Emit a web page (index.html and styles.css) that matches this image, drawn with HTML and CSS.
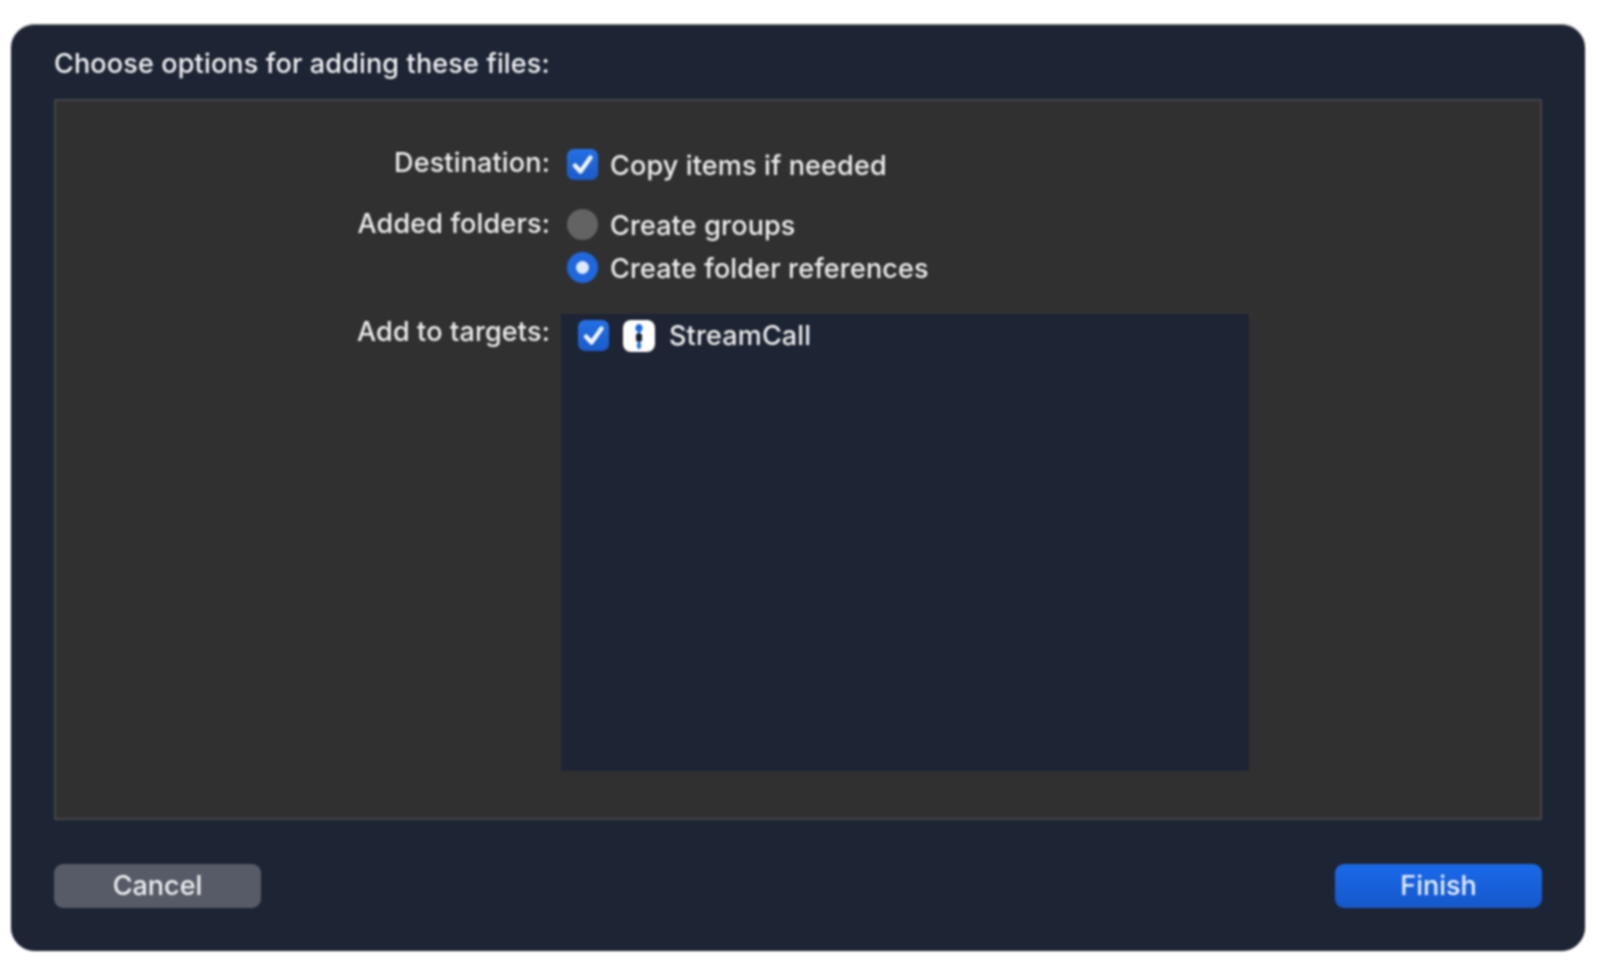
FILE: index.html
```html
<!DOCTYPE html>
<html lang="en">
<head>
  <meta charset="UTF-8" />
  <title>Choose options for adding these files</title>
  <link rel="stylesheet" href="styles.css">
</head>
<body>
  <div class="sheet">
    <h1 class="sheet-title">Choose options for adding these files:</h1>

    <div class="panel">
      <div class="form">
        <div class="label label-dest">Destination:</div>
        <div class="field field-dest">
          <label class="option">
            <span class="check">
              <svg viewBox="0 0 31 31"><path d="M8 16.5l5.5 6L23.5 8.5" /></svg>
            </span>
            <span>Copy items if needed</span>
          </label>
        </div>

        <div class="label label-folders">Added folders:</div>
        <div class="field field-folders">
          <label class="option">
            <span class="radio"></span>
            <span>Create groups</span>
          </label>
          <label class="option">
            <span class="radio radio-on"></span>
            <span>Create folder references</span>
          </label>
        </div>

        <div class="label label-targets">Add to targets:</div>
        <div class="targets">
          <div class="target-row">
            <span class="check">
              <svg viewBox="0 0 31 31"><path d="M8 16.5l5.5 6L23.5 8.5" /></svg>
            </span>
            <span class="app-icon">
              <svg viewBox="0 0 32 32">
                <path class="app-line" d="M16 4v25" />
                <circle class="app-dot" cx="16" cy="8" r="3.6" />
                <rect class="app-body" x="13" y="13.5" width="6" height="8" rx="1.5" />
                <circle class="app-dot" cx="16" cy="25.5" r="2.2" />
              </svg>
            </span>
            <span>StreamCall</span>
          </div>
        </div>
      </div>
    </div>

    <div class="actions">
      <button class="btn btn-cancel">Cancel</button>
      <button class="btn btn-finish">Finish</button>
    </div>
  </div>
</body>
</html>
```

FILE: styles.css
```css
* {
  margin: 0;
  padding: 0;
  box-sizing: border-box;
  font-family: Inter, Roboto, "Liberation Sans", Arial, sans-serif;
}
body {
  background: #ffffff;
  padding: 24px 15px 19px 11px;
  height: 970px;
  overflow: hidden;
}
.sheet {
  height: 927px;
  background: #1d2433;
  border-radius: 24px;
  border-top: 1px solid #8d929b;
  box-shadow: 0 0 1px #777;
  padding: 0 43px 0 43px;
  display: flex;
  flex-direction: column;
  filter: blur(0.8px);
}
.sheet-title {
  font-size: 27px;
  font-weight: 500;
  letter-spacing: 0.15px;
  color: #eeeff1;
  height: 74px;
  line-height: 78px;
}

/* Grey panel with the form */
.panel {
  height: 721px;
  background: #303030;
  border: 2px solid #444547;
}
.form {
  display: grid;
  grid-template-columns: 494px 688px;
  column-gap: 11px;
  align-items: start;
  padding-top: 48px;
}
.label {
  font-size: 27px;
  font-weight: 500;
  letter-spacing: 0.15px;
  color: #ececec;
  text-align: right;
  line-height: 32px;
  white-space: nowrap;
}
.label-dest { position: relative; top: -2px; }
.label-folders { position: relative; top: -1px; }
.label-targets { position: relative; top: 2px; }
.field {
  display: flex;
  flex-direction: column;
  padding-left: 6px;
  gap: 12px;
}
.field-dest { margin-bottom: 29px; }
.field-folders { margin-bottom: 31px; }
.option {
  display: flex;
  align-items: center;
  gap: 12px;
  height: 31px;
  font-size: 27px;
  font-weight: 500;
  letter-spacing: 0.15px;
  color: #ececec;
  white-space: nowrap;
}
.option span:last-child { position: relative; top: 1px; }
.check {
  flex: none;
  display: block;
  width: 31px;
  height: 31px;
  border-radius: 7px;
  background: linear-gradient(#2470e4, #1a5bc8);
}
.check svg {
  display: block;
  width: 31px;
  height: 31px;
}
.check path {
  fill: none;
  stroke: #f2f6fd;
  stroke-width: 4.4;
  stroke-linecap: round;
  stroke-linejoin: round;
}
.radio {
  flex: none;
  display: block;
  width: 31px;
  height: 31px;
  border-radius: 50%;
  background: #636363;
}
.radio-on {
  background: #1f67dc;
  position: relative;
}
.radio-on::after {
  content: "";
  position: absolute;
  left: 9px;
  top: 9px;
  width: 13px;
  height: 13px;
  border-radius: 50%;
  background: #dfe9fb;
}

/* Targets list */
.targets {
  height: 457px;
  background: #1d2433;
}
.target-row {
  display: flex;
  align-items: center;
  height: 31px;
  margin-top: 6px;
  padding-left: 17px;
  font-size: 27px;
  font-weight: 500;
  letter-spacing: 0.15px;
  color: #ececec;
}
.app-icon {
  flex: none;
  display: block;
  width: 32px;
  height: 32px;
  margin: 0 14px;
  background: #ffffff;
  border-radius: 8px;
}
.app-icon svg {
  display: block;
  width: 32px;
  height: 32px;
}
.app-line { stroke: #1668e0; stroke-width: 2.5; }
.app-dot { fill: #1668e0; }
.app-body { fill: #16202e; }

/* Bottom buttons */
.actions {
  display: flex;
  justify-content: space-between;
  margin-top: 44px;
}
.btn {
  width: 207px;
  height: 44px;
  border: none;
  border-radius: 9px;
  font-size: 27px;
  font-weight: 500;
  line-height: 44px;
}
.btn-cancel {
  background: #565b67;
  color: #eeeff1;
}
.btn-finish {
  background: linear-gradient(#1a69ea, #1558ca);
  color: #e8eefc;
}
```
